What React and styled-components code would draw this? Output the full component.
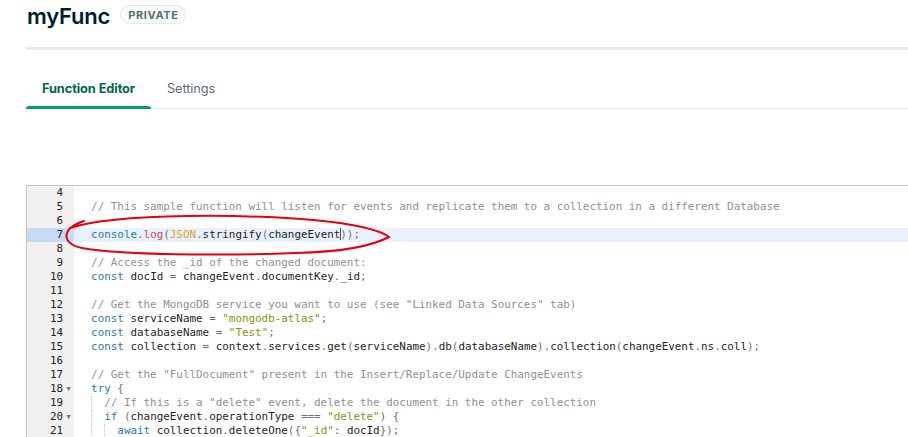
import React from 'react';
import styled, { createGlobalStyle } from 'styled-components';

const GlobalStyle = createGlobalStyle`
body {
  margin: 0;
  background: #ffffff;
  font-family: Inter, "Noto Sans", sans-serif;
  overflow: hidden;
}
`

const Page = styled.div`
width: 908px;
height: 437px;
overflow: hidden;
`

const TitleRow = styled.div`
display: flex;
align-items: center;
gap: 10px;
height: 47px;
padding-left: 27px;
box-sizing: border-box;
padding-bottom: 16px;
`

const Title = styled.h1`
margin: 0;
font-size: 22px;
font-weight: 600;
color: #001e2b;
letter-spacing: -0.2px;
`

const Badge = styled.span`
display: inline-flex;
align-items: center;
height: 19px;
padding: 0 7px;
border: 1px solid #e3e9e7;
background: #f9fbfa;
border-radius: 12px;
font-size: 11px;
font-weight: 700;
letter-spacing: 0.6px;
color: #5c6c75;
box-sizing: border-box;
margin-top: -2px;
`

const Divider = styled.div`
margin-left: 26px;
height: 3px;
background: #e8edeb;
`

const TabList = styled.div`
display: flex;
margin: 19px 0 0 26px;
box-shadow: inset 0 -1px 0 #e8edeb;
`

const Tab = styled.div`
position: relative;
padding: 12px 16px 12px;
font-size: 12.8px;
line-height: 16px;
letter-spacing: -0.1px;
font-weight: ${p => (p.active ? 700 : 400)};
color: ${p => (p.active ? '#00684a' : '#5c6c75')};
&::after {
  content: '';
  display: ${p => (p.active ? 'block' : 'none')};
  position: absolute;
  left: 0;
  right: 0;
  bottom: 0;
  height: 3px;
  border-radius: 4px 4px 0 0;
  background: #00a35c;
}
`

const Editor = styled.div`
position: relative;
margin: 76px 0 0 26px;
border-top: 1px solid #c3c9c7;
border-left: 1px solid #c3c9c7;
font-family: "DejaVu Sans Mono", "Liberation Mono", monospace;
font-size: 10.9px;
`

const Row = styled.div`
display: flex;
height: 14px;
line-height: 14px;
background: ${p => (p.active ? '#e9f2fc' : 'transparent')};
`

const Gutter = styled.div`
display: flex;
justify-content: flex-end;
width: 47px;
flex: none;
background: ${p => (p.active ? '#c6daf4' : '#f2f1ef')};
color: #222222;
`

const Fold = styled.span`
width: 11px;
flex: none;
text-align: center;
font-size: 7px;
color: #777777;
`

const Code = styled.div`
padding-left: 4px;
white-space: pre;
color: #1e1e1e;
`

const Indent = styled.span`
display: inline-block;
width: 2ch;
height: 14px;
vertical-align: top;
box-sizing: border-box;
border-left: ${p => (p.guide ? '1px dotted #c8c8c8' : 'none')};
`

const Tok = styled.span`
color: ${p => p.color};
`

const Cursor = styled.span`
display: inline-block;
width: 1px;
height: 12px;
vertical-align: -2px;
background: #555;
margin-right: -1px;
`

const Ink = styled.svg`
position: absolute;
left: 0;
top: 0;
overflow: visible;
pointer-events: none;
`

const colors = {
  comment: '#8f918f',
  keyword: '#2a7aa6',
  ident: '#1e1e1e',
  punct: '#707070',
  string: '#839612',
  log: '#d0465c',
  json: '#eb9a2a',
};

const special = { const: 'keyword', try: 'keyword', if: 'keyword', await: 'keyword', console: 'keyword', log: 'log', JSON: 'json' };

function tokenize(text) {
  if (text.trim().startsWith('//')) return [['comment', text]];
  const re = /("[^"]*")|([A-Za-z_$][\w$]*)|(\s+)|([^\sA-Za-z_$"]+)/g;
  const out = [];
  let m;
  while ((m = re.exec(text))) {
    if (m[1]) out.push(['string', m[1]]);
    else if (m[2]) out.push([special[m[2]] || 'ident', m[2]]);
    else if (m[3]) out.push(['ident', m[3]]);
    else out.push(['punct', m[4]]);
  }
  return out;
}

const lines = [
  { n: 4, depth: 0, text: '' },
  { n: 5, depth: 0, text: '// This sample function will listen for events and replicate them to a collection in a different Database' },
  { n: 6, depth: 0, text: '' },
  { n: 7, depth: 0, text: 'console.log(JSON.stringify(changeEvent', tail: '));', active: true },
  { n: 8, depth: 0, text: '' },
  { n: 9, depth: 0, text: '// Access the _id of the changed document:' },
  { n: 10, depth: 0, text: 'const docId = changeEvent.documentKey._id;' },
  { n: 11, depth: 0, text: '' },
  { n: 12, depth: 0, text: '// Get the MongoDB service you want to use (see "Linked Data Sources" tab)' },
  { n: 13, depth: 0, text: 'const serviceName = "mongodb-atlas";' },
  { n: 14, depth: 0, text: 'const databaseName = "Test";' },
  { n: 15, depth: 0, text: 'const collection = context.services.get(serviceName).db(databaseName).collection(changeEvent.ns.coll);' },
  { n: 16, depth: 0, text: '' },
  { n: 17, depth: 0, text: '// Get the "FullDocument" present in the Insert/Replace/Update ChangeEvents' },
  { n: 18, depth: 0, text: 'try {', fold: true },
  { n: 19, depth: 1, text: '// If this is a "delete" event, delete the document in the other collection' },
  { n: 20, depth: 1, text: 'if (changeEvent.operationType === "delete") {', fold: true },
  { n: 21, depth: 2, text: 'await collection.deleteOne({"_id": docId});' },
];

function Tokens({ text }) {
  return tokenize(text).map(([type, t], i) => (
    <Tok key={i} color={colors[type]}>{t}</Tok>
  ));
}

function CodeLine({ line }) {
  const guides = [];
  for (let i = 0; i < line.depth; i++) guides.push(<Indent key={i} guide />);
  return (
    <Row active={line.active}>
      <Gutter active={line.active}>
        <span>{line.n}</span>
        <Fold>{line.fold ? '▼' : ''}</Fold>
      </Gutter>
      <Code>
        <Indent />
        {guides}
        <Tokens text={line.text} />
        {line.tail && (
          <>
            <Cursor />
            <Tokens text={line.tail} />
          </>
        )}
      </Code>
    </Row>
  );
}

export default function App() {
  return (
    <Page>
      <GlobalStyle />
      <TitleRow>
        <Title>myFunc</Title>
        <Badge>PRIVATE</Badge>
      </TitleRow>
      <Divider />
      <TabList>
        <Tab active>Function Editor</Tab>
        <Tab>Settings</Tab>
      </TabList>
      <Editor>
        {lines.map(l => <CodeLine key={l.n} line={l} />)}
        <Ink width="400" height="80" viewBox="27 186 400 80">
          <path
            d="M 70 228 C 115 213, 250 213, 332 222 C 362 226, 382 231, 389 237 C 372 246, 340 252, 296 253 C 220 256, 120 255, 82 248 C 62 244, 60 229, 84 221"
            fill="none"
            stroke="#e8000b"
            strokeWidth="2"
            strokeLinecap="round"
          />
        </Ink>
      </Editor>
    </Page>
  );
}
